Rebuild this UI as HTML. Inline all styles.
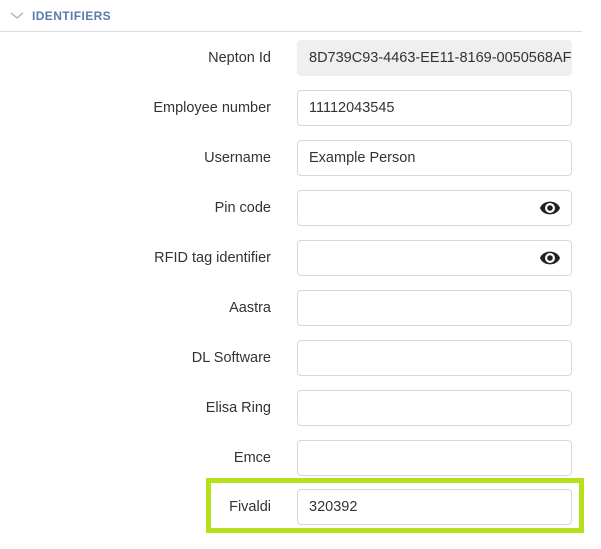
<!DOCTYPE html>
<html><head><style>
body{margin:0;width:601px;height:549px;background:#fff;font-family:"Liberation Sans",sans-serif;position:relative;overflow:hidden}
.hdr{position:absolute;left:32px;top:9px;font-size:12px;font-weight:bold;color:#5a7bab;letter-spacing:0.4px}
.line{position:absolute;left:0;top:31px;width:582px;height:1px;background:#ddd}
.lbl{position:absolute;right:330px;font-size:14.5px;color:#333;line-height:37px;height:37px}
.inp{position:absolute;left:297px;width:273px;height:34px;border:1px solid #d8d8d8;border-radius:4px;background:#fff;font-size:14.5px;color:#333;line-height:35px;box-sizing:content-box}
.inp span{padding-left:11px}
.ro{background:#efefef;border-color:#efefef}
.eye{position:absolute;right:10px;top:8px}
.green{position:absolute;left:206px;top:478px;width:368px;height:45px;border:5px solid #b5e01c}
</style></head><body>
<svg style="position:absolute;left:10px;top:11px" width="14" height="10" viewBox="0 0 14 10"><path d="M1 2l6 5 6-5" fill="none" stroke="#bbb" stroke-width="1.5"/></svg>
<div class="hdr">IDENTIFIERS</div>
<div class="line"></div>

<div class="lbl" style="top:40px">Nepton Id</div>
<div class="inp ro" style="top:40px;overflow:hidden;white-space:nowrap"><span>8D739C93-4463-EE11-8169-0050568AF</span></div>

<div class="lbl" style="top:90px">Employee number</div>
<div class="inp" style="top:90px"><span>11112043545</span></div>

<div class="lbl" style="top:140px">Username</div>
<div class="inp" style="top:140px"><span>Example Person</span></div>

<div class="lbl" style="top:190px">Pin code</div>
<div class="inp" style="top:190px"><svg class="eye" width="22" height="18" viewBox="0 0 22 18"><path d="M1 9C4 0.5 18 0.5 21 9C18 17.5 4 17.5 1 9Z" fill="#222"/><circle cx="11" cy="9" r="5" fill="#fff"/><circle cx="11" cy="9" r="2.8" fill="#222"/></svg></div>

<div class="lbl" style="top:240px">RFID tag identifier</div>
<div class="inp" style="top:240px"><svg class="eye" width="22" height="18" viewBox="0 0 22 18"><path d="M1 9C4 0.5 18 0.5 21 9C18 17.5 4 17.5 1 9Z" fill="#222"/><circle cx="11" cy="9" r="5" fill="#fff"/><circle cx="11" cy="9" r="2.8" fill="#222"/></svg></div>

<div class="lbl" style="top:290px">Aastra</div>
<div class="inp" style="top:290px"></div>

<div class="lbl" style="top:340px">DL Software</div>
<div class="inp" style="top:340px"></div>

<div class="lbl" style="top:390px">Elisa Ring</div>
<div class="inp" style="top:390px"></div>

<div class="lbl" style="top:440px">Emce</div>
<div class="inp" style="top:440px"></div>

<div class="green"></div>
<div class="lbl" style="top:489px">Fivaldi</div>
<div class="inp" style="top:489px"><span>320392</span></div>
</body></html>
